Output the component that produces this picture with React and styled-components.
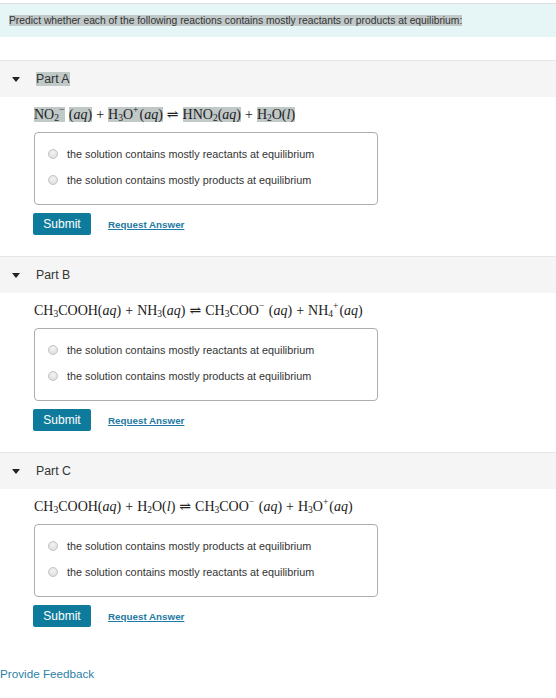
import React from 'react';
import styled, { createGlobalStyle } from 'styled-components';

const GlobalStyle = createGlobalStyle`
  body {
    margin: 0;
    background: #fff;
    font-family: "Liberation Sans", Arial, sans-serif;
    color: #333;
  }
`;

const Page = styled.div`
  width: 556px;
  padding-top: 3px;
`;

const Intro = styled.div`
  border-top: 1px solid #dedede;
  background: #e6f6f7;
  height: 33px;
  display: flex;
  align-items: center;
  padding-left: 9px;
  font-size: 10.3px;
  margin-bottom: 23px;
`;

const Hl = styled.span`
  background: ${(p) => (p.$on ? '#c0c8c8' : 'transparent')};
`;

const Section = styled.section`
  margin-bottom: 21px;
`;

const Header = styled.div`
  border-top: 1px solid #e6e6e6;
  background: #f5f5f5;
  height: 36px;
  display: flex;
  align-items: center;
  padding-left: 12px;
  font-size: 12.3px;
`;

const Caret = styled.span`
  width: 0;
  height: 0;
  border-left: 4px solid transparent;
  border-right: 4px solid transparent;
  border-top: 5px solid #222;
  margin-right: 16px;
`;

const Body = styled.div`
  padding-left: 34px;
`;

const Equation = styled.div`
  margin-top: 8px;
  height: 20px;
  line-height: 20px;
  font-family: "Liberation Serif", "DejaVu Serif", serif;
  font-size: 14px;
  color: #222;
  white-space: nowrap;
`;

const I = styled.i`
  font-style: italic;
`;

const Sub = styled.sub`
  font-size: 9.5px;
  vertical-align: -2px;
  line-height: 0;
`;

const Sup = styled.sup`
  font-size: 9.5px;
  vertical-align: 6px;
  line-height: 0;
  margin-right: 1px;
`;

const Op = styled.span`
  margin: 0 4px;
`;

const Options = styled.div`
  margin-top: 7px;
  width: 329px;
  border: 1px solid #adadad;
  border-radius: 4px;
  padding: 11px 0 14px 13px;
  display: flex;
  flex-direction: column;
  gap: 6px;
`;

const Option = styled.label`
  height: 20px;
  display: flex;
  align-items: center;
  font-size: 10.8px;
  color: #333;
`;

const Radio = styled.span`
  width: 8px;
  height: 8px;
  border-radius: 50%;
  border: 1px solid #c4c4c4;
  background: radial-gradient(circle at 50% 35%, #f4f4f4, #d8d8d8);
  margin-right: 9px;
`;

const Actions = styled.div`
  margin-top: 8px;
  display: flex;
  align-items: center;
  margin-left: -1px;
`;

const SubmitButton = styled.button`
  width: 58px;
  height: 22px;
  border: none;
  border-radius: 2px;
  background: #0f7b9c;
  color: #fff;
  font-family: "Liberation Sans", Arial, sans-serif;
  font-size: 12px;
  padding: 0;
`;

const RequestLink = styled.a`
  margin-left: 17px;
  font-size: 9.8px;
  font-weight: bold;
  color: #1f7aa3;
  text-decoration: underline;
`;

const Feedback = styled.a`
  display: block;
  margin-top: 40px;
  font-size: 11.7px;
  color: #2d7fa6;
  text-decoration: none;
`;

const eqA = (
  <>
    <Hl $on>NO<Sub>2</Sub><Sup>−</Sup></Hl> <Hl $on>(<I>aq</I>)</Hl>
    <Op>+</Op>
    <Hl $on>H<Sub>3</Sub>O<Sup>+</Sup>(<I>aq</I>)</Hl>
    <Op>⇌</Op>
    <Hl $on>HNO<Sub>2</Sub>(<I>aq</I>)</Hl>
    <Op>+</Op>
    <Hl $on>H<Sub>2</Sub>O(<I>l</I>)</Hl>
  </>
);

const eqB = (
  <>
    CH<Sub>3</Sub>COOH(<I>aq</I>)<Op>+</Op>NH<Sub>3</Sub>(<I>aq</I>)<Op>⇌</Op>
    CH<Sub>3</Sub>COO<Sup>−</Sup> (<I>aq</I>)<Op>+</Op>NH<Sub>4</Sub><Sup>+</Sup>(<I>aq</I>)
  </>
);

const eqC = (
  <>
    CH<Sub>3</Sub>COOH(<I>aq</I>)<Op>+</Op>H<Sub>2</Sub>O(<I>l</I>)<Op>⇌</Op>
    CH<Sub>3</Sub>COO<Sup>−</Sup> (<I>aq</I>)<Op>+</Op>H<Sub>3</Sub>O<Sup>+</Sup>(<I>aq</I>)
  </>
);

const REACT = 'the solution contains mostly reactants at equilibrium';
const PROD = 'the solution contains mostly products at equilibrium';

const parts = [
  { id: 'A', eq: eqA, options: [REACT, PROD], highlight: true },
  { id: 'B', eq: eqB, options: [REACT, PROD] },
  { id: 'C', eq: eqC, options: [PROD, REACT] },
];

const Part = ({ id, eq, options, highlight }) => (
  <Section>
    <Header>
      <Caret />
      <Hl $on={highlight}>Part {id}</Hl>
    </Header>
    <Body>
      <Equation>{eq}</Equation>
      <Options>
        {options.map((o) => (
          <Option key={o}>
            <Radio />
            {o}
          </Option>
        ))}
      </Options>
      <Actions>
        <SubmitButton>Submit</SubmitButton>
        <RequestLink href="#">Request Answer</RequestLink>
      </Actions>
    </Body>
  </Section>
);

export default function App() {
  return (
    <>
      <GlobalStyle />
      <Page>
        <Intro>
          <Hl $on>
            Predict whether each of the following reactions contains mostly reactants or products at equilibrium:
          </Hl>
        </Intro>
        {parts.map((p) => (
          <Part key={p.id} {...p} />
        ))}
        <Feedback href="#">Provide Feedback</Feedback>
      </Page>
    </>
  );
}
